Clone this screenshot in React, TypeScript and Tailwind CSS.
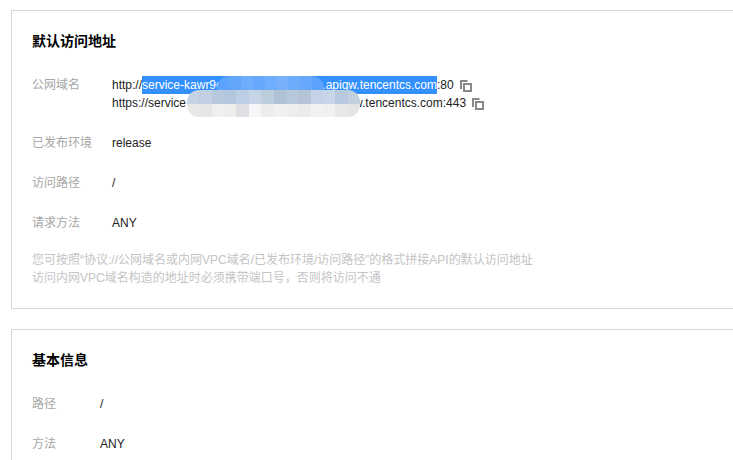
import React from 'react';

const FONT = '"Liberation Sans", "Noto Sans CJK SC", sans-serif';

// mosaic colours for the masked part of the two urls
const MOSAIC_TOP = ['#5ba3fd', '#62a6fc', '#6eadfc', '#66a8fc', '#6eaefc', '#77b1fb', '#6dacfb', '#66a8fc', '#5ba3fd'];
const MOSAIC_MID = ['#c6d3e4', '#c0cfe2', '#b8c8dc', '#b4c6dc', '#bccde4', '#c6d4e8', '#bccddc', '#b0c2d6', '#b8c8dc', '#b4c4d6', '#c4d4e6', '#c6d6e8', '#b8c8de', '#c0d0de'];
const MOSAIC_LOW = ['#e8e8e8', '#e6e6e6', '#f0efee', '#eeeeec', '#dfdfe3', '#f6f6f8', '#ececec', '#f0f0ef', '#efeeec', '#ebebe9', '#f2f2f1', '#f0f0f0', '#e8e8e8', '#e4e4e4'];

const CopyIcon = () => (
  <svg width="12" height="12" viewBox="0 0 12 12" className="ml-[6px] mt-[4px] shrink-0">
    <path d="M1 9V1h6.5" fill="none" stroke="#888" strokeWidth="2" />
    <rect x="4" y="4" width="7" height="7" fill="none" stroke="#888" strokeWidth="2" />
  </svg>
);

const Row = ({ label, labelClass, children, className = '' }: { label: string; labelClass: string; children: React.ReactNode; className?: string }) => (
  <div className={`flex text-xs leading-[18px] ${className}`}>
    <div className={`text-[#a6a6a6] ${labelClass}`}>{label}</div>
    <div className="text-[#222]">{children}</div>
  </div>
);

const App: React.FC = () => {
  return (
    <div className="w-[733px] h-[460px] overflow-hidden bg-white pt-[10px] pl-[11px] relative" style={{ fontFamily: FONT }}>
      <div className="w-[760px] h-[299px] border border-[#d1d5e0] pt-5 pl-5">
        <h2 className="text-sm leading-5 font-bold text-black">默认访问地址</h2>

        <Row label="公网域名" labelClass="w-20" className="mt-[25px]">
          <div className="flex">
            <span>http://</span>
            <span className="bg-[#3390ff] text-white w-[295px] h-[18px] flex justify-between">
              <span>service-kawr9c</span>
              <span>.apigw.tencentcs.com</span>
            </span>
            <span>:80</span>
            <CopyIcon />
          </div>
          <div className="flex">
            <span>https://service</span>
            <span className="w-[168px]" />
            <span>w.tencentcs.com:443</span>
            <CopyIcon />
          </div>
        </Row>
        <Row label="已发布环境" labelClass="w-20" className="mt-[22px]">release</Row>
        <Row label="访问路径" labelClass="w-20" className="mt-[22px]">/</Row>
        <Row label="请求方法" labelClass="w-20" className="mt-[22px]">ANY</Row>

        <p className="mt-[19px] text-xs leading-[18px] text-[#c4c4c4]">
          您可按照“协议://公网域名或内网VPC域名/已发布环境/访问路径”的格式拼接API的默认访问地址
          <br />
          访问内网VPC域名构造的地址时必须携带端口号，否则将访问不通
        </p>
      </div>

      <div className="w-[760px] h-[200px] mt-5 border border-[#d1d5e0] pt-5 pl-5">
        <h2 className="text-sm leading-5 font-bold text-black">基本信息</h2>
        <Row label="路径" labelClass="w-[68px]" className="mt-[25px]">/</Row>
        <Row label="方法" labelClass="w-[68px]" className="mt-[22px]">ANY</Row>
      </div>

      {/* pixelated mask over the urls */}
      <div className="absolute left-[187px] top-[76px] w-[173px] h-[41px] flex flex-col blur-[0.5px]">
        <div className="flex h-[14px] ml-[30px] w-[107px] rounded-t-xl overflow-hidden">
          {MOSAIC_TOP.map((c, i) => (
            <div key={i} className="flex-1" style={{ backgroundColor: c }} />
          ))}
        </div>
        <div className="flex h-[14px] rounded-tl-xl rounded-tr-xl overflow-hidden">
          {MOSAIC_MID.map((c, i) => (
            <div key={i} className="flex-1" style={{ backgroundColor: c }} />
          ))}
        </div>
        <div className="flex h-[13px] rounded-bl-xl rounded-br-xl overflow-hidden">
          {MOSAIC_LOW.map((c, i) => (
            <div key={i} className="flex-1" style={{ backgroundColor: c }} />
          ))}
        </div>
      </div>
    </div>
  );
};

export default App;
